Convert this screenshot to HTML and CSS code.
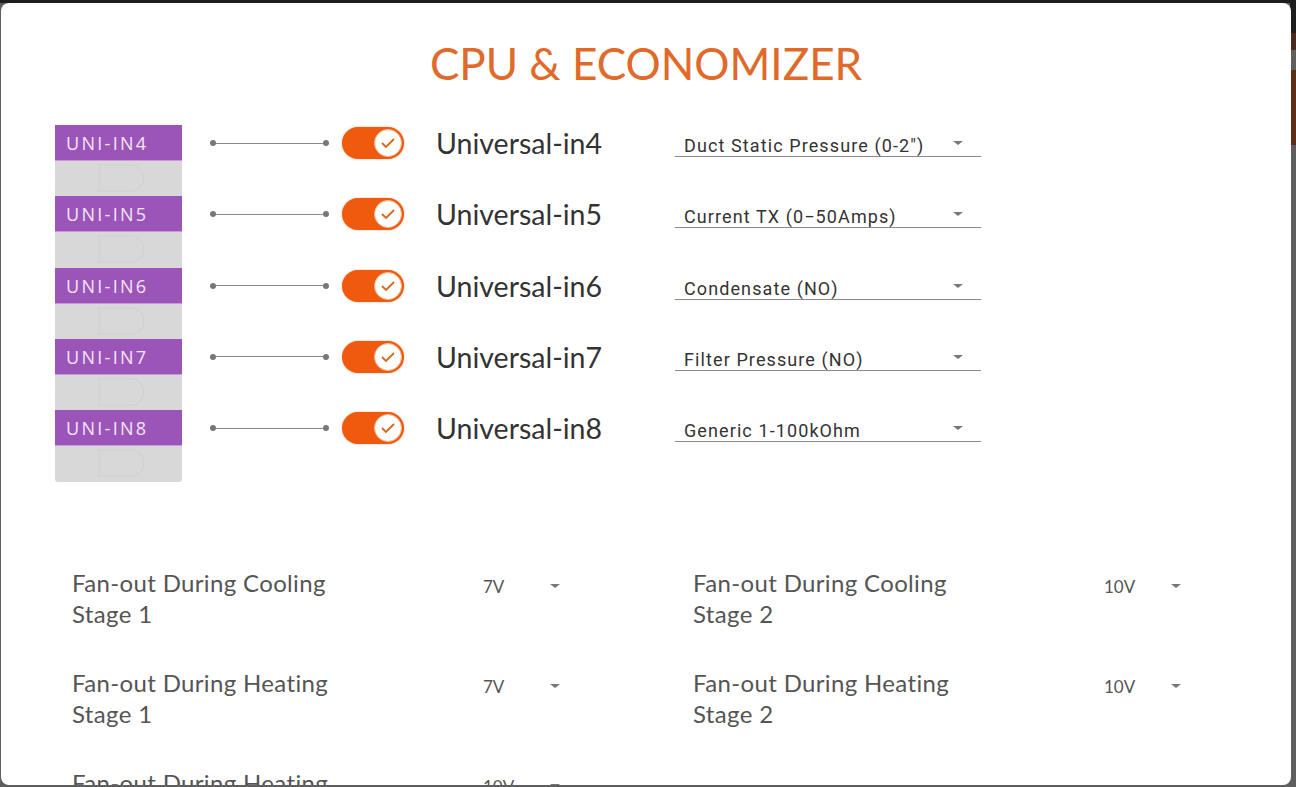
FILE: index.html
```html
<!DOCTYPE html>
<html>
<head>
<meta charset="utf-8">
<link rel="stylesheet" href="styles.css">
</head>
<body>
<div class="topbar"></div>
<div class="dialog">
  <h1 class="title">CPU &amp; ECONOMIZER</h1>
  <div class="inputs">
    <div class="row">
      <div class="slot"><div class="tag">UNI-IN4</div><svg class="plug" width="60" height="30" viewBox="0 0 60 30"><path d="M2 2 H36 A13 13 0 0 1 36 28 H2 M4 2 V28" fill="none" stroke="#d0d0d0" stroke-width="1"/></svg></div>
      <div class="main">
        <div class="wire"><span class="dot"></span><span class="line"></span><span class="dot"></span></div>
        <div class="toggle"><span class="knob"><svg width="16" height="12" viewBox="0 0 16 12"><path d="M2 6 L6 10 L14 2" fill="none" stroke="#d2691e" stroke-width="1.8"/></svg></span></div>
        <div class="name">Universal-in4</div>
        <div class="select"><span>Duct Static Pressure (0-2")</span><span class="caret"></span></div>
      </div>
    </div>
    <div class="row">
      <div class="slot"><div class="tag">UNI-IN5</div><svg class="plug" width="60" height="30" viewBox="0 0 60 30"><path d="M2 2 H36 A13 13 0 0 1 36 28 H2 M4 2 V28" fill="none" stroke="#d0d0d0" stroke-width="1"/></svg></div>
      <div class="main">
        <div class="wire"><span class="dot"></span><span class="line"></span><span class="dot"></span></div>
        <div class="toggle"><span class="knob"><svg width="16" height="12" viewBox="0 0 16 12"><path d="M2 6 L6 10 L14 2" fill="none" stroke="#d2691e" stroke-width="1.8"/></svg></span></div>
        <div class="name">Universal-in5</div>
        <div class="select"><span>Current TX (0−50Amps)</span><span class="caret"></span></div>
      </div>
    </div>
    <div class="row">
      <div class="slot"><div class="tag">UNI-IN6</div><svg class="plug" width="60" height="30" viewBox="0 0 60 30"><path d="M2 2 H36 A13 13 0 0 1 36 28 H2 M4 2 V28" fill="none" stroke="#d0d0d0" stroke-width="1"/></svg></div>
      <div class="main">
        <div class="wire"><span class="dot"></span><span class="line"></span><span class="dot"></span></div>
        <div class="toggle"><span class="knob"><svg width="16" height="12" viewBox="0 0 16 12"><path d="M2 6 L6 10 L14 2" fill="none" stroke="#d2691e" stroke-width="1.8"/></svg></span></div>
        <div class="name">Universal-in6</div>
        <div class="select"><span>Condensate (NO)</span><span class="caret"></span></div>
      </div>
    </div>
    <div class="row">
      <div class="slot"><div class="tag">UNI-IN7</div><svg class="plug" width="60" height="30" viewBox="0 0 60 30"><path d="M2 2 H36 A13 13 0 0 1 36 28 H2 M4 2 V28" fill="none" stroke="#d0d0d0" stroke-width="1"/></svg></div>
      <div class="main">
        <div class="wire"><span class="dot"></span><span class="line"></span><span class="dot"></span></div>
        <div class="toggle"><span class="knob"><svg width="16" height="12" viewBox="0 0 16 12"><path d="M2 6 L6 10 L14 2" fill="none" stroke="#d2691e" stroke-width="1.8"/></svg></span></div>
        <div class="name">Universal-in7</div>
        <div class="select"><span>Filter Pressure (NO)</span><span class="caret"></span></div>
      </div>
    </div>
    <div class="row last">
      <div class="slot"><div class="tag">UNI-IN8</div><svg class="plug" width="60" height="30" viewBox="0 0 60 30"><path d="M2 2 H36 A13 13 0 0 1 36 28 H2 M4 2 V28" fill="none" stroke="#d0d0d0" stroke-width="1"/></svg></div>
      <div class="main">
        <div class="wire"><span class="dot"></span><span class="line"></span><span class="dot"></span></div>
        <div class="toggle"><span class="knob"><svg width="16" height="12" viewBox="0 0 16 12"><path d="M2 6 L6 10 L14 2" fill="none" stroke="#d2691e" stroke-width="1.8"/></svg></span></div>
        <div class="name">Universal-in8</div>
        <div class="select"><span>Generic 1-100kOhm</span><span class="caret"></span></div>
      </div>
    </div>
  </div>
  <div class="fans">
    <div class="fan"><div class="flabel">Fan-out During Cooling<br>Stage 1</div><div class="fval">7V</div><span class="caret"></span></div>
    <div class="fan"><div class="flabel">Fan-out During Cooling<br>Stage 2</div><div class="fval">10V</div><span class="caret"></span></div>
    <div class="fan"><div class="flabel">Fan-out During Heating<br>Stage 1</div><div class="fval">7V</div><span class="caret"></span></div>
    <div class="fan"><div class="flabel">Fan-out During Heating<br>Stage 2</div><div class="fval">10V</div><span class="caret"></span></div>
    <div class="fan"><div class="flabel">Fan-out During Heating<br>Stage 3</div><div class="fval">10V</div><span class="caret"></span></div>
  </div>
</div>
</body>
</html>
```

FILE: styles.css
```css
* { box-sizing: border-box; }
html, body { margin: 0; padding: 0; }
body {
  width: 1296px;
  height: 787px;
  overflow: hidden;
  background: linear-gradient(to bottom, #1e1e1e 0, #1e1e1e 33px, #4a2a1a 33px, #4a2a1a 50px, #5e5e5e 50px, #5e5e5e 70px, #5a2e14 70px, #5a2e14 145px, #5e5e5e 145px) right top / 6px 100% no-repeat, #5e5e5e;
  font-family: Lato, "Liberation Sans", sans-serif;
}
.topbar {
  height: 3px;
  background: #1e1e1e;
}
.dialog {
  margin-left: 1px;
  width: 1290px;
  height: 782px;
  background: #ffffff;
  border-radius: 8px;
  overflow: hidden;
  padding-top: 35px;
}
.title {
  margin: 0;
  text-align: center;
  font-family: Lato, sans-serif;
  font-weight: 400;
  font-size: 44px;
  line-height: 50px;
  color: #e06a2a;
}
.inputs {
  margin-top: 37px;
  margin-left: 54px;
  display: flex;
  flex-direction: column;
}
.row {
  display: flex;
  align-items: flex-start;
  height: 71.25px;
}
.slot {
  width: 127px;
  height: 71.25px;
  background: #d8d8d8;
  position: relative;
}
.row.last .slot {
  border-radius: 0 0 3px 3px;
  height: 72px;
}
.tag {
  height: 36px;
  background: #9b55b8;
  color: #f3e6f8;
  font-family: "Open Sans", sans-serif;
  font-size: 18px;
  letter-spacing: 2.3px;
  line-height: 36px;
  padding-left: 11px;
  border-bottom: 1px solid #c79ad6;
}
.plug {
  position: absolute;
  left: 40px;
  top: 38px;
}
.main {
  display: flex;
  align-items: flex-start;
  height: 36px;
}
.wire {
  display: flex;
  align-items: center;
  margin-left: 28px;
  width: 119px;
  height: 36px;
}
.dot {
  width: 6px;
  height: 6px;
  border-radius: 50%;
  background: #777;
}
.line {
  flex: 1;
  height: 1px;
  background: #8a8a8a;
}
.toggle {
  margin-top: 2px;
  margin-left: 13px;
  width: 62px;
  height: 32px;
  border-radius: 16px;
  background: #f05a0e;
  display: flex;
  align-items: center;
  justify-content: flex-end;
  padding-right: 2px;
  box-shadow: 0 0 2px rgba(240, 90, 14, 0.5);
}
.knob {
  width: 28px;
  height: 28px;
  border-radius: 50%;
  background: #fff;
  border: 1px solid #f7b48a;
  display: flex;
  align-items: center;
  justify-content: center;
}
.name {
  margin-left: 32px;
  width: 239px;
  height: 36px;
  line-height: 36px;
  font-size: 28.5px;
  color: #333;
  font-family: Lato, sans-serif;
}
.select {
  width: 306px;
  height: 32px;
  display: flex;
  align-items: flex-end;
  justify-content: space-between;
  border-bottom: 1px solid #8a8a8a;
  padding: 0 18px 0 9px;
  font-family: Roboto, sans-serif;
  font-size: 18px;
  letter-spacing: 1.1px;
  line-height: 20px;
  color: #333;
}
.select .caret {
  margin-bottom: 11px;
}
.caret {
  width: 0;
  height: 0;
  border-left: 5px solid transparent;
  border-right: 5px solid transparent;
  border-top: 4px solid #777;
}
.fans {
  margin-top: 86px;
  margin-left: 71px;
  display: grid;
  grid-template-columns: 621px 500px;
  row-gap: 38px;
}
.fan {
  display: flex;
  align-items: flex-start;
}
.flabel {
  width: 411px;
  font-size: 24px;
  letter-spacing: 0.35px;
  line-height: 31px;
  color: #555;
  font-family: Lato, sans-serif;
}
.fval {
  width: 67px;
  margin-top: 9px;
  font-size: 17px;
  color: #555;
  font-family: Lato, sans-serif;
}
.fan .caret {
  margin-top: 17px;
  border-top-color: #777;
}
```
